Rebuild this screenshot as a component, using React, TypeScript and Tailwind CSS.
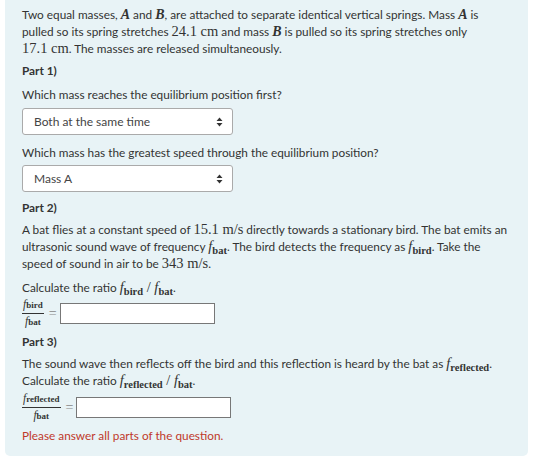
import React from "react";

const serif = { fontFamily: '"Liberation Serif", "DejaVu Serif", serif' };

function V({ children }: { children: React.ReactNode }) {
  return (
    <span style={serif} className="text-[14px] italic font-bold leading-none">
      {children}
    </span>
  );
}

function N({ children }: { children: React.ReactNode }) {
  return (
    <span style={serif} className="text-[14.5px] leading-none whitespace-nowrap">
      {children}
    </span>
  );
}

function F({ sub }: { sub: string }) {
  return (
    <span style={serif} className="text-[14.5px] whitespace-nowrap leading-none">
      <span className="italic">f</span>
      <span className="relative top-[3px] text-[10.5px] font-bold leading-none">{sub}</span>
    </span>
  );
}

function Frac({ top }: { top: string }) {
  return (
    <span style={serif} className="inline-flex flex-col items-center leading-none text-[9px] mr-[2px]">
      <span className="border-b border-[#333] px-[1px] pb-[2px] whitespace-nowrap">
        <span className="italic text-[11.5px]">f</span>
        <span className="font-bold">{top}</span>
      </span>
      <span className="pt-[2px] whitespace-nowrap">
        <span className="italic text-[11.5px]">f</span>
        <span className="font-bold">bat</span>
      </span>
    </span>
  );
}

function Select({ value }: { value: string }) {
  return (
    <div className="flex h-[27px] w-[211px] items-center justify-between rounded-[3px] border border-[#aaa] bg-white pl-[11px] pr-[9px] text-[12px] text-[#444]">
      <span>{value}</span>
      <svg width="7" height="10" viewBox="0 0 7 10">
        <path d="M3.5 0.5 L6.5 4 H0.5 Z M3.5 9.5 L6.5 6 H0.5 Z" fill="#333" />
      </svg>
    </div>
  );
}

export default function App() {
  return (
    <div className="h-[462px] w-[533px] bg-white" style={{ fontFamily: 'Lato, "Open Sans", sans-serif' }}>
      <div className="mx-[5px] rounded-b-[5px] bg-[#e8f3f6] px-[17px] pb-[12px] pt-[6px] text-[11.8px] leading-[17px] text-[#333]">
        <p>
          Two equal masses, <V>A</V> and <V>B</V>, are attached to separate identical vertical springs. Mass <V>A</V> is
          pulled so its spring stretches <N>24.1 cm</N> and mass <V>B</V> is pulled so its spring stretches only
          <br />
          <N>17.1 cm</N>. The masses are released simultaneously.
        </p>
        <p className="mt-[5px] font-bold">Part 1)</p>
        <p className="mt-[7px]">Which mass reaches the equilibrium position first?</p>
        <div className="mt-[5px]">
          <Select value="Both at the same time" />
        </div>
        <p className="mt-[9px]">Which mass has the greatest speed through the equilibrium position?</p>
        <div className="mt-[4px]">
          <Select value="Mass A" />
        </div>
        <p className="mt-[7px] font-bold">Part 2)</p>
        <p className="mt-[5px]">
          A bat flies at a constant speed of <N>15.1 m/s</N> directly towards a stationary bird. The bat emits an
          ultrasonic sound wave of frequency <F sub="bat" />. The bird detects the frequency as <F sub="bird" />. Take the
          speed of sound in air to be <N>343 m/s</N>.
        </p>
        <p className="mt-[7px]">
          Calculate the ratio <F sub="bird" />
          <N> / </N>
          <F sub="bat" />.
        </p>
        <div className="mt-[3px] flex items-center">
          <Frac top="bird" />
          <span style={serif} className="mx-[3px] text-[14px] text-[#888]">=</span>
          <div className="h-[21px] w-[155px] border border-[#777] bg-white" />
        </div>
        <p className="mt-[6px] font-bold">Part 3)</p>
        <p className="mt-[5px]">
          The sound wave then reflects off the bird and this reflection is heard by the bat as <F sub="reflected" />.
          <br />
          Calculate the ratio <F sub="reflected" />
          <N> / </N>
          <F sub="bat" />.
        </p>
        <div className="mt-[4px] flex items-center">
          <Frac top="reflected" />
          <span style={serif} className="mx-[3px] text-[14px] text-[#888]">=</span>
          <div className="h-[21px] w-[155px] border border-[#777] bg-white" />
        </div>
        <p className="mt-[6px] text-[#c0392b]">Please answer all parts of the question.</p>
      </div>
    </div>
  );
}
